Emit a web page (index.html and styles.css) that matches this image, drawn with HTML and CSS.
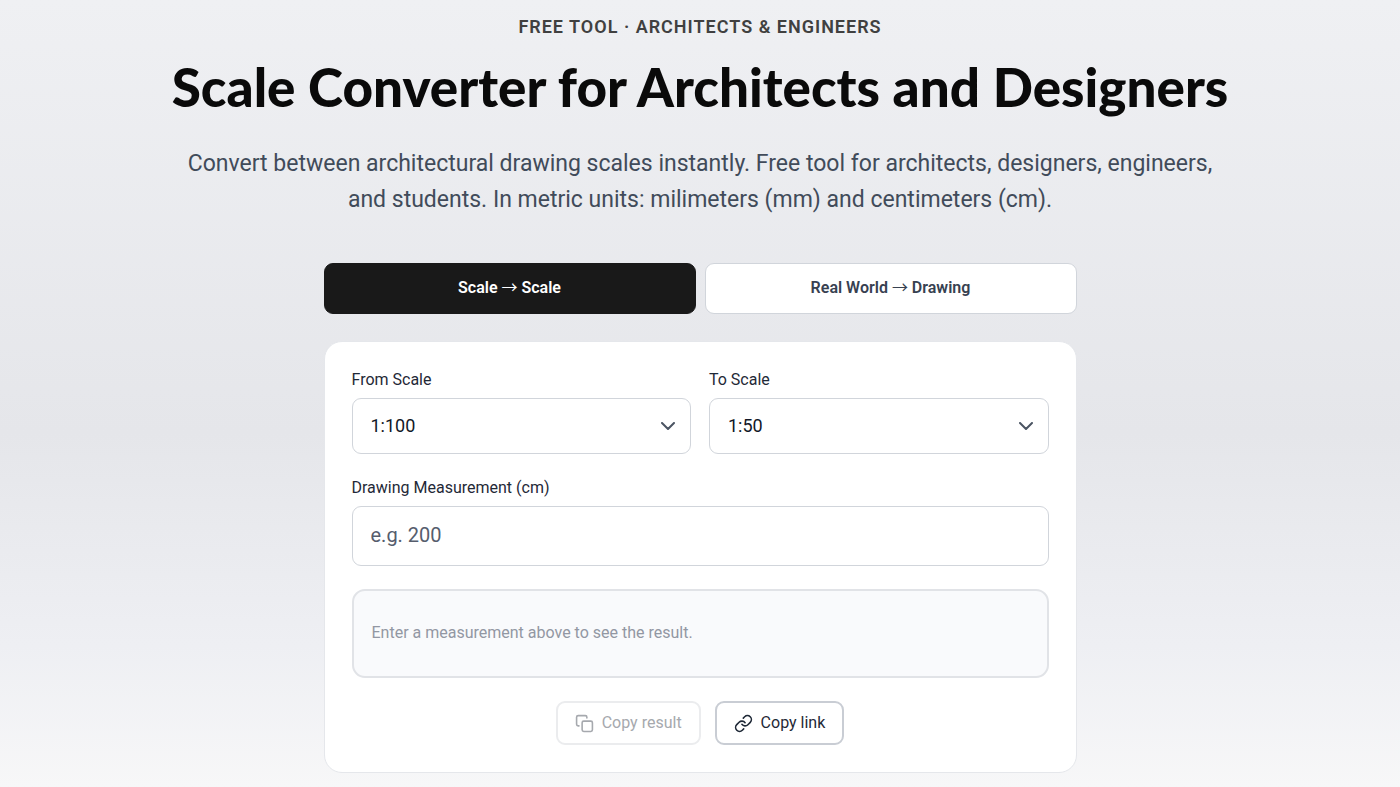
FILE: index.html
```html
<!DOCTYPE html>
<html lang="en">

<head>
  <meta charset="UTF-8" />
  <meta name="viewport" content="width=device-width, initial-scale=1.0" />
  <title>Scale Converter for Architects and Designers</title>
  <link rel="stylesheet" href="styles.css">
</head>

<body>
  <header class="hero">
    <p class="eyebrow">Free Tool · Architects &amp; Engineers</p>
    <h1>Scale Converter for Architects and Designers</h1>
    <p class="subtitle">Convert between architectural drawing scales instantly. Free tool for architects, designers, engineers, and students. In metric units: milimeters (mm) and centimeters (cm).</p>
  </header>

  <main class="converter">
    <div class="tabs">
      <button type="button" class="tab active">Scale <span class="arrow">→</span> Scale</button>
      <button type="button" class="tab">Real World <span class="arrow">→</span> Drawing</button>
    </div>

    <form class="card">
      <div class="scales">
        <div class="field">
          <label for="from">From Scale</label>
          <div class="select-box">
            <select id="from">
              <option>1:20</option>
              <option>1:50</option>
              <option selected>1:100</option>
              <option>1:200</option>
            </select>
            <svg class="chevron" viewBox="0 0 14 8" aria-hidden="true"><path d="M1 1l6 6 6-6" /></svg>
          </div>
        </div>
        <div class="field">
          <label for="to">To Scale</label>
          <div class="select-box">
            <select id="to">
              <option>1:20</option>
              <option selected>1:50</option>
              <option>1:100</option>
              <option>1:200</option>
            </select>
            <svg class="chevron" viewBox="0 0 14 8" aria-hidden="true"><path d="M1 1l6 6 6-6" /></svg>
          </div>
        </div>
      </div>

      <div class="field">
        <label for="measurement">Drawing Measurement (cm)</label>
        <input type="text" inputmode="decimal" id="measurement" placeholder="e.g. 200" />
      </div>

      <div class="result">Enter a measurement above to see the result.</div>

      <div class="actions">
        <button type="button" class="action" disabled>
          <svg class="icon" viewBox="0 0 24 24" aria-hidden="true">
            <rect x="9" y="9" width="13" height="13" rx="2" />
            <path d="M5 15H4a2 2 0 0 1-2-2V4a2 2 0 0 1 2-2h9a2 2 0 0 1 2 2v1" />
          </svg>
          Copy result
        </button>
        <button type="button" class="action">
          <svg class="icon" viewBox="0 0 24 24" aria-hidden="true">
            <path d="M10 13a5 5 0 0 0 7.540.540l3-3a5 5 0 0 0-7.070-7.070l-1.720 1.710" />
            <path d="M14 11a5 5 0 0 0-7.540-.540l-3 3a5 5 0 0 0 7.070 7.070l1.710-1.710" />
          </svg>
          Copy link
        </button>
      </div>
    </form>
  </main>
</body>

</html>
```
FILE: styles.css
```css
* {
  box-sizing: border-box;
}

body {
  margin: 0;
  min-height: 100vh;
  padding: 14px 24px;
  background: linear-gradient(#eff0f3, #e5e6ea 55%, #eeeff3 82%, #f7f7f8);
  font-family: Roboto, sans-serif;
  color: #1f2937;
}

.hero {
  text-align: center;
}

.eyebrow {
  margin: 0;
  color: #404040;
  font-size: 18px;
  font-weight: 600;
  line-height: 26px;
  letter-spacing: 1px;
  text-transform: uppercase;
}

h1 {
  margin: 15px 0 27px;
  color: #0a0a0a;
  font-family: Lato, sans-serif;
  font-size: 53px;
  font-weight: 900;
  line-height: 64px;
}

.subtitle {
  max-width: 1040px;
  margin: 0 auto;
  color: #414b5a;
  font-size: 23px;
  line-height: 36px;
}

.converter {
  max-width: 753px;
  margin: 45px auto 0;
}

.tabs {
  display: grid;
  grid-template-columns: 1fr 1fr;
  gap: 9px;
  margin-bottom: 27px;
}

.tab {
  padding: 11px 12px 13px;
  border: 1px solid #d1d5db;
  border-radius: 9px;
  background-color: #fff;
  color: #374151;
  font-family: inherit;
  font-size: 16px;
  font-weight: 600;
  line-height: 25px;
  cursor: pointer;
}

.tab.active {
  border-color: #191919;
  background-color: #191919;
  color: #fff;
}

.arrow {
  font-family: "Noto Sans CJK JP", sans-serif;
  font-weight: 400;
  line-height: 1;
}

.card {
  display: flex;
  flex-direction: column;
  gap: 23px;
  padding: 27px;
  border: 1px solid #e5e7eb;
  border-radius: 18px;
  background-color: #fff;
}

.scales {
  display: grid;
  grid-template-columns: 1fr 1fr;
  gap: 18px;
}

.field label {
  display: block;
  margin-bottom: 8px;
  font-size: 16px;
  line-height: 21px;
}

.select-box {
  position: relative;
}

.field select,
.field input {
  display: block;
  width: 100%;
  padding: 0 18px 2px;
  border: 1px solid #d1d5db;
  border-radius: 9px;
  background-color: #fff;
  color: #111827;
  font-family: inherit;
}

.field select {
  height: 56px;
  appearance: none;
  font-size: 18px;
}

.field input {
  height: 60px;
  font-size: 20px;
}

.field input::placeholder {
  color: #565d6d;
}

.chevron {
  position: absolute;
  top: 24px;
  right: 16px;
  width: 14px;
  height: 8px;
  fill: none;
  stroke: #4b5563;
  stroke-width: 2;
  stroke-linecap: round;
  stroke-linejoin: round;
  pointer-events: none;
}

.result {
  padding: 31px 18px 33px;
  border: 2px solid #e1e3e7;
  border-radius: 13px;
  background-color: #f9fafc;
  color: #9297a3;
  font-size: 16px;
  line-height: 21px;
}

.actions {
  display: flex;
  justify-content: center;
  gap: 14px;
}

.action {
  display: flex;
  align-items: center;
  gap: 8px;
  padding: 10px 17px;
  border: 2px solid #c9cdd4;
  border-radius: 9px;
  background-color: #fff;
  color: #1f2937;
  font-family: inherit;
  font-size: 16px;
  line-height: 20px;
  cursor: pointer;
}

.action:disabled {
  border-color: #ebecee;
  color: #a6a9ae;
  cursor: default;
}

.icon {
  width: 19px;
  height: 19px;
  fill: none;
  stroke: currentColor;
  stroke-width: 2;
  stroke-linecap: round;
  stroke-linejoin: round;
}
```
